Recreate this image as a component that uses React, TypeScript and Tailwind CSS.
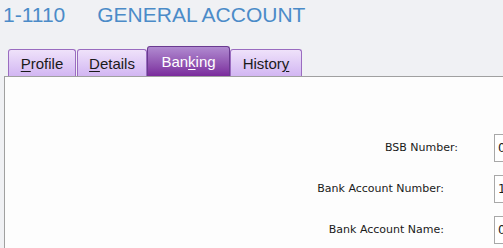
import React from "react";

const tabs = [
  { pre: "", key: "P", post: "rofile", w: "w-[68px] mr-[1px]" },
  { pre: "", key: "D", post: "etails", w: "w-[70px]" },
  { pre: "Ban", key: "k", post: "ing", w: "w-[83px]", active: true },
  { pre: "Histor", key: "y", post: "", w: "w-[72px]" },
];

const rows = [
  { label: "BSB Number:", value: "0", pr: "pr-[36px]" },
  { label: "Bank Account Number:", value: "1", pr: "pr-[50px]" },
  { label: "Bank Account Name:", value: "0", pr: "pr-[50px]" },
];

const App = () => {
  return (
    <div className="w-[503px] h-[248px] overflow-hidden bg-[#f0f1f4] font-['Liberation_Sans',Arial,sans-serif]">
      <div className="h-[46px] pl-[3px] pt-[2px] text-[21px] leading-[26px] text-[#4b8bc8]">
        <span>1-1110</span>
        <span className="ml-[32px]">GENERAL ACCOUNT</span>
      </div>

      <div className="flex items-end pl-[8px] h-[30px]">
        {tabs.map((t, i) => (
          <div
            key={i}
            className={
              t.active
                ? `${t.w} h-[30px] flex items-center justify-center rounded-t-[3px] border border-b-0 border-[#6a3a90] bg-gradient-to-b from-[#b08ad0] to-[#7a2a9c] text-white text-[15px] pt-[2px]`
                : `${t.w} h-[27px] flex items-center justify-center rounded-t-[3px] border border-b-0 border-[#9a6cc0] bg-gradient-to-b from-[#efe2fa] to-[#d2b6f2] text-[#1a1a1a] text-[15px] pt-[3px]`
            }
          >
            <span>
              {t.pre}
              <span className="underline underline-offset-[2px]">{t.key}</span>
              {t.post}
            </span>
          </div>
        ))}
      </div>

      <div className="ml-[4px] w-[600px] h-[200px] border-l border-t border-[#a0a0a0] bg-[#fdfdfd] pt-[57px] flex flex-col gap-[13px] font-['DejaVu_Sans',Tahoma,sans-serif] text-[11px] text-[#1a1a1a]">
        {rows.map((r, i) => (
          <div key={i} className="flex items-center h-[28px]">
            <div className={`w-[489px] text-right ${r.pr}`}>{r.label}</div>
            <div className="w-[100px] h-[28px] border border-[#a8a8a8] bg-white flex items-center pl-[3px] text-[12px]">
              {r.value}
            </div>
          </div>
        ))}
      </div>
    </div>
  );
};

export default App;
